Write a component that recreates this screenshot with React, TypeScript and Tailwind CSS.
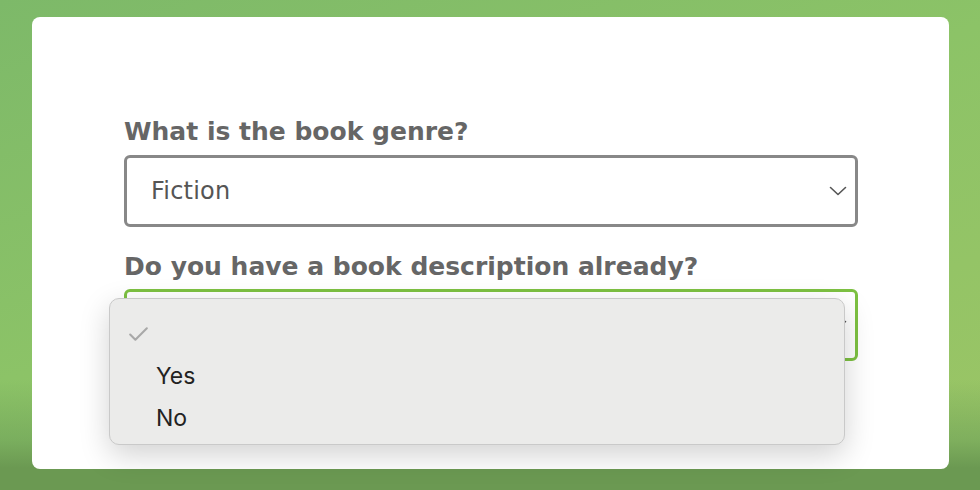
import { Check } from 'lucide-react'

function Chevron() {
  return (
    <svg width="18" height="10" viewBox="0 0 18 10" fill="none" className="shrink-0">
      <path d="M1.5 1.5 L9 8.5 L16.5 1.5" stroke="#555" strokeWidth="1.6" strokeLinecap="round" strokeLinejoin="round" />
    </svg>
  )
}

export default function App() {
  return (
    <div className="w-[980px] h-[490px] overflow-hidden bg-[linear-gradient(160deg,#7db969_0%,#8cc367_45%,#9cc565_100%)] relative">
      <div className="absolute inset-x-0 bottom-0 h-[110px] bg-[linear-gradient(180deg,rgba(106,154,82,0)_0%,rgba(108,160,88,0.6)_55%,#6b9952_80%)]" />
      <div className="relative ml-[32px] mt-[17px] w-[917px] h-[452px] rounded-[8px] bg-white pl-[92px] pt-[99px]">
        <div className="w-[734px] font-['DejaVu_Sans',sans-serif]">
          <label className="block text-[25px] leading-[32px] font-bold text-[#666]">
            What is the book genre?
          </label>
          <div className="mt-[7px] h-[72px] rounded-[6px] border-[3px] border-[#888] flex items-center justify-between pl-[24px] pr-[8px]">
            <span className="text-[24px] text-[#555] tracking-[0.2px]">Fiction</span>
            <Chevron />
          </div>
          <label className="block mt-[24px] text-[25px] leading-[32px] font-bold text-[#666]">
            Do you have a book description already?
          </label>
          <div className="relative mt-[6px]">
            <div className="h-[72px] rounded-[6px] border-[3px] border-[#7dc142] flex items-center justify-end pr-[8px]">
              <Chevron />
            </div>
            <div className="absolute left-[-15px] top-[9px] w-[736px] h-[147px] rounded-[10px] bg-[#ebebea] border border-[#c9c9c9] shadow-[0_10px_30px_rgba(0,0,0,0.18)] pt-[14px] font-['Inter',sans-serif] text-[23px] text-[#222]">
              <div className="h-[42px] flex items-center pl-[16px]">
                <Check size={25} strokeWidth={2} color="#a8a8a8" />
              </div>
              <div className="h-[42px] flex items-center pl-[46px]">Yes</div>
              <div className="h-[42px] flex items-center pl-[46px]">No</div>
            </div>
          </div>
        </div>
      </div>
    </div>
  )
}
